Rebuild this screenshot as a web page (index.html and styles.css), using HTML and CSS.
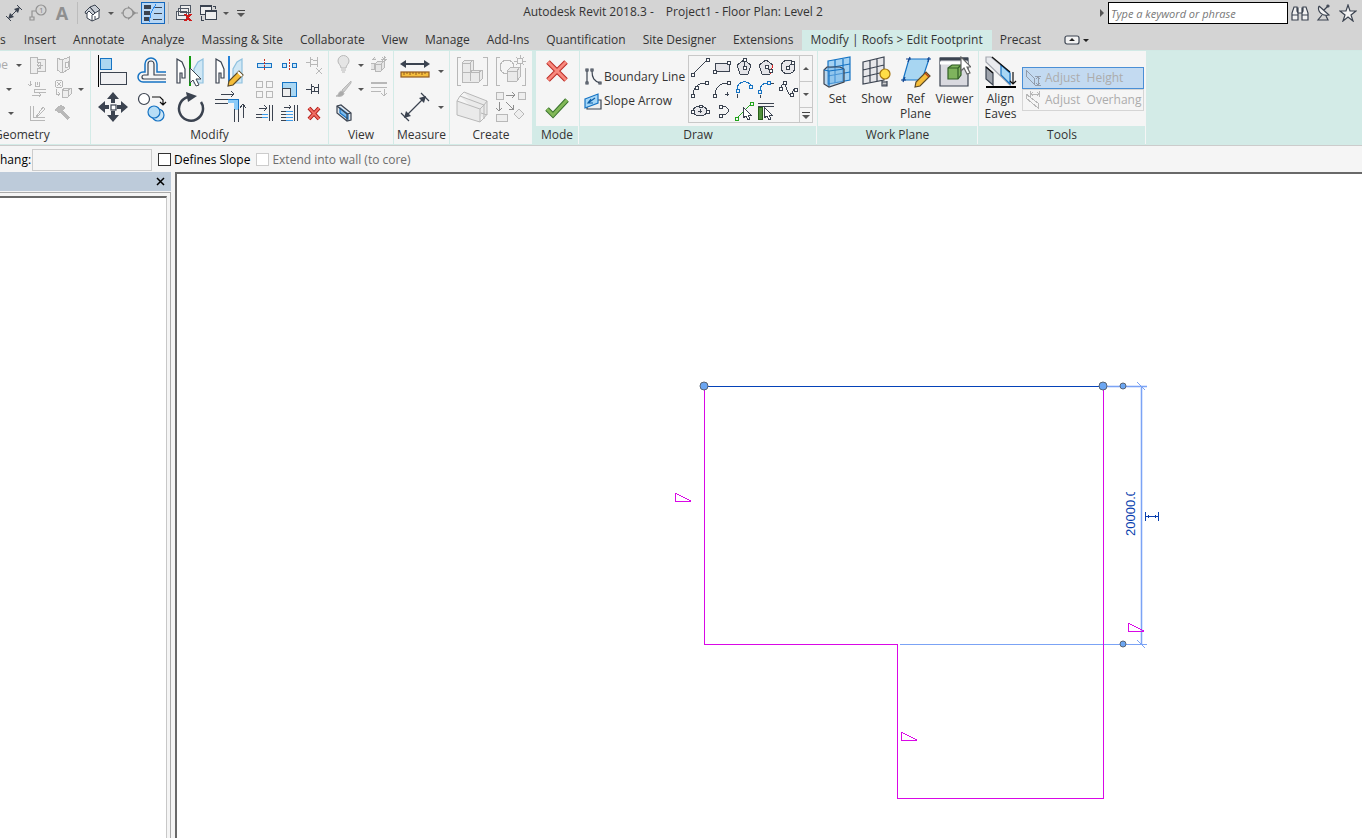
FILE: index.html
```
<!DOCTYPE html>
<html lang="en">
<head>
    <meta charset="UTF-8">
    <meta name="viewport" content="width=device-width, initial-scale=1.0">
    <title>Autodesk Revit 2018.3 - Project1 - Floor Plan: Level 2</title>
    <link rel="stylesheet" href="styles.css">
</head>
<body>
    <header class="titlebar">
        <div class="quick-access">
            <button class="qa" aria-label="Aligned dimension"><svg class="icon" width="18" height="18"><path d="M4 14L14 4M1 12l5 5M12 1l5 5" stroke-width="1"/><path d="M3 15l2-6 4 4zM15 3l-2 6-4-4z" fill="#3b4350" stroke="none"/></svg></button>
            <button class="qa" aria-label="Tag by category"><svg class="icon" width="18" height="18" stroke-width="1"><circle cx="12" cy="6" r="5" stroke="#929292"/><path d="M7 7H3v6M1 13h4v3H1z" stroke="#929292"/><text class="tag-digit" x="10" y="9">1</text></svg></button>
            <button class="qa glyph" aria-label="Text">A</button>
            <span class="divider"></span>
            <button class="qa" aria-label="Default 3D view"><svg class="icon" width="18" height="18" ><path d="M3 8v6l5 3 7-3V7L10 2z" fill="#fff" stroke-width="1"/><path d="M1 8l5-5 5 6-2 2-4-4-3 3zM6 3l5-2 5 5-5 3z" fill="#c9ced5" stroke-width="1"/><path d="M8 17v-6M11 12v3" stroke-width="1"/></svg></button>
            <button class="drop" aria-label="3D view options"></button>
            <button class="qa" aria-label="Section"><svg class="icon" width="18" height="18"><path d="M8 2l8 7-8 7z" fill="#8f8f8f" stroke="none"/><circle cx="8" cy="9" r="5" fill="#d4d4d4" stroke="#8f8f8f"/><path d="M1 9h3M15 9h3" stroke="#8f8f8f"/></svg></button>
            <button class="qa pressed" aria-label="Thin lines" aria-pressed="true"><svg class="icon crisp" width="18" height="18"><path d="M0 3h7M0 9h6M0 15h5" stroke-width="4"/><path d="M11 3h7M10 9h8M9 15h9"/><path d="M12 0L7 9l-2 9" stroke="#2c8bef"/></svg></button>
            <span class="divider"></span>
            <button class="qa" aria-label="Close hidden windows"><svg class="icon crisp" width="18" height="18"><path d="M5 1h10v7H5zM3 4h10v7H3zM1 7h10v8H1z" fill="#eee" stroke="#4f5763"/><path d="M10 10l6 7M16 10l-6 7" stroke="#d01818" stroke-width="2"/></svg></button>
            <button class="qa" aria-label="Switch windows"><svg class="icon crisp" width="18" height="18"><path d="M1 1h11v9H1z" fill="#eee"/><path d="M1 2h11" stroke-width="2"/><path d="M6 6h11v9H6z" fill="#eee"/><path d="M6 7h11" stroke-width="2"/><path d="M14 2h2v3M2 12v4h3"/></svg></button>
            <button class="drop" aria-label="Window list"></button>
            <button class="drop lined" aria-label="Customize quick access"></button>
        </div>
        <h1 class="title"><span>Autodesk Revit 2018.3 -</span><span>Project1 - Floor Plan: Level 2</span></h1>
        <div class="search">
            <button class="drop side" aria-label="Collapse search"></button>
            <input type="text" aria-label="Search" placeholder="Type a keyword or phrase">
            <button class="qa" aria-label="Find"><svg class="icon" width="18" height="18"><path d="M3 3h3v4l1 2v7H1V9zM12 3h3l2 6v7h-6V9l1-2zM6 4h1v5h4V4h1" fill="#f2f2f2"/><path d="M1 11h6M11 11h6"/></svg></button>
            <button class="qa" aria-label="Communication center"><svg class="icon" width="18" height="18"><path d="M4 2c-2 5 3 11 10 9L4 2M9 6l4-4" fill="#f2f2f2"/><circle cx="13" cy="2" r="1"/><path d="M7 11l-4 5h10l-2-4"/></svg></button>
            <button class="qa" aria-label="Favorites"><svg class="icon" width="18" height="18"><path d="M9 1l2 6h6l-5 4 2 6-5-4-5 4 2-6-5-4h6z" fill="#f2f2f2"/></svg></button>
        </div>
    </header>

    <nav class="tabs">
        <a href="#" class="tab cut">s</a>
        <a href="#" class="tab">Insert</a>
        <a href="#" class="tab">Annotate</a>
        <a href="#" class="tab">Analyze</a>
        <a href="#" class="tab">Massing &amp; Site</a>
        <a href="#" class="tab">Collaborate</a>
        <a href="#" class="tab">View</a>
        <a href="#" class="tab">Manage</a>
        <a href="#" class="tab">Add-Ins</a>
        <a href="#" class="tab">Quantification</a>
        <a href="#" class="tab">Site Designer</a>
        <a href="#" class="tab">Extensions</a>
        <a href="#" class="tab active">Modify | Roofs &gt; Edit Footprint</a>
        <a href="#" class="tab">Precast</a>
        <button class="ribbon-toggle" aria-label="Minimize ribbon"><svg class="icon" width="26" height="10"><rect x="1" y="1" width="14" height="8" rx="2" fill="#f2f2f2"/><path d="M5 6l3-3 3 3zM19 4h6l-3 3z" fill="#222" stroke="none"/></svg></button>
    </nav>

    <div class="ribbon">
        <section class="panel geometry">
            <div class="tools">
                <span class="faded first">pe<i class="caret"></i></span>
                <button aria-label="Cut"><svg class="icon muted" width="20" height="20"><path d="M2 2h7v5h3v6H9v5H2zM9 7V4h8v12H9v-3" fill="#eee"/><path d="M15 10H9m3-3l-3 3 3 3"/></svg></button>
                <button aria-label="Wall opening"><svg class="icon muted" width="20" height="20"><path d="M4 3l5 2 7-3v12l-7 4-5-3zM9 5v13M12 8v5l3-1V7z" fill="#eee"/></svg></button>
                <span></span>
                <span class="faded"><i class="caret"></i></span>
                <button aria-label="Join"><svg class="icon muted" width="20" height="20"><path d="M2 2v5m-2-2l2 2 2-2M7 3v4h4V3M9 3v3M6 10h12M6 13h12M6 10v3M4 16h9m-2-2l2 2-2 2"/></svg></button>
                <button aria-label="Split face"><svg class="icon muted" width="20" height="20"><circle cx="6" cy="5" r="4"/><path d="M4 3l4 4M8 3L4 7M3 10v5h4m-2-2l2 2-2 2"/><path d="M9 11l3-2h6v6l-3 3H9zM9 11h6v7M15 11l3-2" fill="#eee"/></svg></button>
                <span><i class="caret"></i></span>
                <span class="faded"><i class="caret late"></i></span>
                <button aria-label="Beam joins"><svg class="icon muted" width="20" height="20"><path d="M2 3v14h15M5 3v11h12M8 14l7-10 2 2-7 7-4 2z"/></svg></button>
                <button aria-label="Demolish"><svg class="icon muted" width="20" height="20"><path d="M2 7l6-5 4 3-5 5z" fill="#bbb"/><path d="M8 8l8 8" stroke-width="3"/></svg></button>
            </div>
            <h2>Geometry</h2>
        </section>

        <section class="panel modify">
            <div class="body">
                <div class="tools large">
                    <button aria-label="Align"><svg class="icon crisp" width="32" height="32"><path d="M1 0v32" stroke="#000"/><rect x="3" y="3" width="11" height="11" fill="#acd7f1" stroke="#1673c3"/><rect x="3" y="17" width="26" height="12" fill="#f0f0f2"/></svg></button>
                    <button aria-label="Offset"><svg class="icon" width="32" height="32"><path d="M30 17H21V9a6 6 0 0 0-12 0v8H7a5 5 0 0 0 0 10h23" stroke="#1673c3" stroke-width="1.500"/><path d="M30 20H18V9a2 2 0 0 0-6 0v11H8a2 2 0 0 0 0 4h22"/></svg></button>
                    <button aria-label="Mirror pick axis"><svg class="icon" width="32" height="32"><path d="M2 4l5 3 3 7v9H7v-5H5v10H2z" fill="#fff"/><path d="M28 4l-5 3-4 7v14h9z" fill="#cfe7f5" stroke="#8fc1df"/><path d="M15 1v30" stroke="#149b10" stroke-width="2"/><path d="M15 13v15l3-3 3 6 3-1-3-6h5z" fill="#fff" stroke-width="1"/></svg></button>
                    <button aria-label="Mirror draw axis"><svg class="icon" width="32" height="32"><path d="M2 4l5 3 3 7v9H7v-5H5v10H2z" fill="#fff"/><path d="M28 4l-5 3-4 7v14h9z" fill="#cfe7f5" stroke="#8fc1df"/><path d="M15 1v28" stroke="#2581d8" stroke-width="2"/><path d="M14 31l1-5 10-10 4 4-10 10z" fill="#f5bd39" stroke="#5c4a28"/><path d="M24 17l4 4" stroke="#fff" stroke-width="2"/></svg></button>
                    <button aria-label="Move"><svg class="icon" width="32" height="32"><path d="M16 1l6 7h-4v4h-4V8h-4zM16 31l6-7h-4v-4h-4v4h-4zM1 16l7-6v4h4v4H8v4zM31 16l-7-6v4h-4v4h4v4z" fill="#3b4350" stroke="none"/><rect x="14" y="14" width="5" height="5" fill="#fff"/></svg></button>
                    <button aria-label="Copy"><svg class="icon" width="32" height="32"><circle cx="8" cy="8" r="5.500" fill="#fff"/><path d="M16 6h8l3 3v4m-3-2l3 3 3-3" stroke="#111"/><circle cx="22" cy="24" r="6" fill="#c9e5f7" stroke="#1673c3"/><circle cx="18" cy="21" r="6" fill="#b7def6" stroke="#1673c3"/></svg></button>
                    <button aria-label="Rotate"><svg class="icon" width="32" height="32"><path d="M26 11A12 12 0 1 1 13 6" stroke-width="2.500"/><path d="M11 1l11 4-9 6z" fill="#3b4350" stroke="none"/></svg></button>
                    <button aria-label="Trim/extend to corner"><svg class="icon crisp" width="32" height="32"><path d="M14 10h8v9" stroke="#8bcbf8" stroke-width="4"/><path d="M14 8h10v10" stroke="#1673c3"/><path d="M7 3h13m-3-3l3 3-3 3M1 8h13M1 12h13M20 18v13M24 18v13M29 27V13m-3 4l3-4 3 4"/></svg></button>
                </div>
                <div class="tools small">
                    <button aria-label="Split element"><svg class="icon crisp" width="20" height="20"><path d="M3 8h14v4H3z" fill="#cce6f8" stroke="#1673c3"/><path d="M10 4v12" stroke="#c62f20" stroke-dasharray="2 1"/></svg></button>
                    <button aria-label="Split with gap"><svg class="icon crisp" width="20" height="20"><path d="M3 8h4v4H3zM13 8h4v4h-4z" fill="#cce6f8" stroke="#1673c3"/><path d="M10 4v12" stroke="#c62f20" stroke-dasharray="2 1"/></svg></button>
                    <button aria-label="Unpin"><svg class="icon muted" width="20" height="20"><path d="M2 7h4M6 2v10M6 4l3 1h4M6 10l3-1h4M13 2v10M12 13l6 6M18 13l-6 6"/></svg></button>
                    <button aria-label="Array"><svg class="icon muted" width="20" height="20"><path d="M2 2h6v6H2zM12 2h6v6h-6zM2 12h6v6H2zM12 12h6v6h-6z"/></svg></button>
                    <button aria-label="Scale"><svg class="icon crisp" width="20" height="20"><path d="M3 3h14v14H3z" fill="#a9d7f4" stroke="#1673c3"/><path d="M3 9h8v8H3z" fill="#eee"/></svg></button>
                    <button aria-label="Pin"><svg class="icon crisp" width="20" height="20"><path d="M2 10h5M7 5v10M7 7l3 1h4M7 13l3-1h4M14 5v10M10 8v4"/></svg></button>
                    <button aria-label="Trim/extend single"><svg class="icon crisp" width="20" height="20"><path d="M5 5h7m-2-3l3 3-3 3M15 2v16M18 2v16M2 11h6M2 14h6"/><path d="M8 11h6M8 14h6" stroke="#3c9bea"/></svg></button>
                    <button aria-label="Trim/extend multiple"><svg class="icon crisp" width="20" height="20"><path d="M5 4h7m-2-2l2 2-2 2M15 2v16M18 2v16M2 8h5M2 11h5M2 14h5M2 17h5"/><path d="M7 8h7M7 11h7M7 14h7M7 17h7" stroke="#3c9bea"/></svg></button>
                    <button aria-label="Delete"><svg class="icon" width="20" height="20"><path d="M5 5l10 11M15 5L5 16" stroke="#ac1815" stroke-width="4"/><path d="M5 5l10 11M15 5L5 16" stroke="#f06d62" stroke-width="2"/></svg></button>
                </div>
            </div>
            <h2>Modify</h2>
        </section>

        <section class="panel view">
            <div class="tools">
                <button aria-label="Hide in view"><svg class="icon muted smooth" width="20" height="20"><path d="M7 13c0-3-3-4-3-7a5 5 0 0 1 11 0c0 3-3 4-3 7zM7 15h5M8 17h3" fill="#e5e5e5"/></svg></button>
                <span><i class="caret"></i></span>
                <button aria-label="Displace elements"><svg class="icon muted" width="20" height="20"><path d="M6 9l3-3h6v7l-3 3H6zM6 9h6v7M12 9l3-3M2 8h3v6H2M7 4H4l2-2M15 1v6M12 4h6M13 2l4 4M17 2l-4 4" fill="#e5e5e5"/></svg></button>
                <button aria-label="Override graphics"><svg class="icon muted smooth" width="20" height="20"><path d="M17 2l-9 9 2 2 7-9z" fill="#ccc"/><path d="M2 17c3 0 2-5 6-5l2 2c0 3-4 4-8 3z" fill="#aaa"/></svg></button>
                <span><i class="caret"></i></span>
                <button aria-label="Linework"><svg class="icon muted" width="20" height="20"><path d="M2 4h16" stroke-width="2"/><path d="M2 8h16M2 12h10M15 10v7m-3-3l3 3 3-3"/></svg></button>
                <button aria-label="Selection box"><svg class="icon" width="20" height="20"><path d="M3 3l4-1 10 8v7l-4 1L3 10z" fill="#dfe5eb"/><path d="M6 5l8 6v5l-8-6z" fill="#7cbdf2" stroke="#1673c3"/><path d="M3 3l10 8v7M13 11l4-1"/></svg></button>
            </div>
            <h2>View</h2>
        </section>

        <section class="panel measure">
            <div class="tools">
                <button aria-label="Measure between"><svg class="icon" width="32" height="32"><path d="M4 9h24" stroke-width="2"/><path d="M1 9l6-4v8zM31 9l-6-4v8z" fill="#3b4350" stroke="none"/><rect x="2" y="17" width="28" height="5" fill="#f4bd3d" stroke="#925a1f"/><path d="M5 17v3M8 17v2M11 17v3M14 17v2M17 17v3M20 17v2M23 17v3M26 17v2" stroke="#925a1f" stroke-width="1"/></svg></button>
                <span><i class="caret"></i></span>
                <button aria-label="Dimension"><svg class="icon" width="32" height="32"><path d="M6 26L26 6M2 22l8 8M22 2l8 8"/><path d="M5 27l2-7 5 5zM27 5l-7 2 5 5z" fill="#3b4350" stroke="none"/></svg></button>
                <span><i class="caret"></i></span>
            </div>
            <h2>Measure</h2>
        </section>

        <section class="panel create">
            <div class="tools">
                <button aria-label="Create assembly"><svg class="icon muted" width="32" height="32"><path d="M5 2H1v28h4M27 2h4v28h-4"/><path d="M6 8l3-3h8v10h9v9l-3 3H6zM6 8h8v9H6M14 8l3-3M14 17h9v9M14 17v9M23 17l3-2M14 17l3-2" fill="#eaeaea"/></svg></button>
                <button aria-label="Create group"><svg class="icon muted" width="32" height="32"><path d="M5 2H1v28h4M27 30h3V13"/><circle cx="12" cy="12" r="7"/><path d="M12 16l4-4h9v10l-3 4H12zM12 16h10v10M22 16l3-4" fill="#eaeaea"/><circle cx="25" cy="6" r="3"/><path d="M25 0v3M25 9v3M19 6h3M28 6h3M21 2l2 2M27 8l2 2M29 2l-2 2M23 8l-2 2"/></svg></button>
                <button aria-label="Create similar"><svg class="icon muted smooth" width="32" height="32"><path d="M8 1l23 9v14l-6-2M4 5l24 9v14" fill="#eaeaea"/><path d="M1 10l23 8v13L1 24zM1 10l3-5M24 18l4-4M24 31l4-4M4 5l4-4M28 14l3-4M28 27l3-4" fill="#eaeaea"/></svg></button>
                <button aria-label="Create parts"><svg class="icon muted" width="32" height="32"><path d="M1 1h7v7H1zM23 1h7v7h-7zM1 23h11v7H1zM24 18l5 5-5 5-5-5z" fill="#eee"/><path d="M11 4h9m-3-3l3 3-3 3M4 11v9m-3-3l3 3 3-3M11 11l7 7m0-4v4h-4" stroke="#8f8f8f"/></svg></button>
            </div>
            <h2>Create</h2>
        </section>

        <section class="panel contextual mode">
            <div class="tools">
                <button aria-label="Cancel edit mode"><svg class="icon" width="32" height="32"><path d="M7 7l18 18M25 7L7 25" stroke="#bb2a24" stroke-width="5"/><path d="M7 7l18 18M25 7L7 25" stroke="#f8897e" stroke-width="3"/></svg></button>
                <button aria-label="Finish edit mode"><svg class="icon" width="32" height="32"><path d="M6 18l6 6L26 9" stroke="#37712c" stroke-width="5"/><path d="M6 18l6 6L26 9" stroke="#82b858" stroke-width="3"/></svg></button>
            </div>
            <h2>Mode</h2>
        </section>

        <section class="panel contextual draw">
            <div class="body">
                <div class="draw-modes">
                    <button><svg class="icon" width="18" height="18"><path d="M3 3v12M8 3c0 7 2 10 8 12"/><path d="M2 1h2v2H2zM2 14h2v2H2zM7 1h2v2H7zM15 14h2v2h-2z" fill="#fff"/></svg>Boundary Line</button>
                    <button><svg class="icon" width="18" height="18"><path d="M3 8h14v9H3z" fill="#eee"/><path d="M1 7l13-5v9L1 16z" fill="#a5d6f7" stroke="#1673c3"/><path d="M11 6l-7 5m3-4l-3 4h5" stroke="#0d5ea8"/></svg>Slope Arrow</button>
                </div>
                <div class="gallery">
                    <button aria-label="Line"><svg class="icon thin" width="20" height="20"><path d="M3 17L17 3"/><path class="node" d="M1 16h3v3H1zM16 1h3v3h-3z"/></svg></button>
                    <button aria-label="Rectangle"><svg class="icon thin" width="20" height="20"><path d="M3 6h14v8H3z" fill="#e4e4e8"/><path class="node" d="M1 13h3v3H1zM15 4h3v3h-3z"/></svg></button>
                    <button aria-label="Inscribed polygon"><svg class="icon thin" width="20" height="20"><path d="M10 3l7 5-3 9H6L3 8z" fill="#e4e4e8"/><path d="M10 3v8"/><path class="node" d="M9 1h3v3H9zM9 9h3v3H9z"/></svg></button>
                    <button aria-label="Circumscribed polygon"><svg class="icon thin" width="20" height="20"><path d="M10 3l7 5-3 9H6L3 8z" fill="#e4e4e8"/><path d="M17 8l-3 9" stroke="#e02020"/><path d="M10 10l4 3"/><path class="node" d="M9 8h3v3H9zM13 12h3v3h-3z"/></svg></button>
                    <button aria-label="Circle"><svg class="icon thin" width="20" height="20"><circle cx="10" cy="10" r="7" fill="#e8e8eb"/><path d="M10 10l4-4"/><path class="node" d="M8 9h3v3H8zM13 4h3v3h-3z"/></svg></button>
                    <button aria-label="Start-end-radius arc"><svg class="icon thin" width="20" height="20"><path d="M3 16c0-7 5-12 13-12"/><path class="node" d="M1 15h3v3H1zM5 7h3v3H5zM15 2h3v3h-3z"/></svg></button>
                    <button aria-label="Center-ends arc"><svg class="icon thin" width="20" height="20"><path d="M3 16c0-7 5-12 13-12M13 15h4M15 13v4"/><path class="node" d="M1 15h3v3H1zM15 2h3v3h-3z"/></svg></button>
                    <button aria-label="Tangent end arc"><svg class="icon thin" width="20" height="20"><path d="M3 11C3 1 15 1 17 7M2 10h3v3H2zM15 6h3v3h-3z" stroke="#1673c3"/><path d="M3 15v4"/></svg></button>
                    <button aria-label="Fillet arc"><svg class="icon thin" width="20" height="20"><path d="M4 12c0-5 3-8 8-8M2 11h3v3H2zM11 2h3v3h-3z" stroke="#1673c3"/><path d="M4 16v3M15 4h3"/></svg></button>
                    <button aria-label="Spline"><svg class="icon thin" width="20" height="20"><path d="M3 9c2-7 4-5 5-1s4 11 6 6 2-4 3-1"/><path class="node" d="M1 8h3v3H1zM5 2h3v3H5zM12 14h3v3h-3zM16 9h3v3h-3z"/></svg></button>
                    <button aria-label="Ellipse"><svg class="icon thin" width="20" height="20"><ellipse cx="10" cy="10" rx="7" ry="5" fill="#e8e8eb"/><path d="M8 10h4M10 8v4"/><path class="node" d="M1 9h3v3H1zM16 9h3v3h-3zM9 4h3v2H9z"/></svg></button>
                    <button aria-label="Partial ellipse"><svg class="icon thin" width="20" height="20"><path d="M9 5c10 0 10 9 0 9"/><path class="node" d="M7 4h3v3H7zM7 13h3v3H7z"/></svg></button>
                    <button aria-label="Pick lines"><svg class="icon thin" width="20" height="20"><path d="M3 17L17 3M1 16h3v3H1zM16 1h3v3h-3z" stroke="#22a51c"/><path d="M9 6v11l3-2 2 4 2-1-2-4h3z" fill="#fff"/></svg></button>
                    <button aria-label="Pick walls"><svg class="icon thin" width="20" height="20"><path d="M2 2h16M2 5h16" stroke-width="1"/><path d="M2 6h4v12H2z" fill="#51913b" stroke="#286018"/><path d="M8 6v11l3-2 2 4 2-1-2-4h3z" fill="#fff"/></svg></button>
                    <div class="gallery-scroll">
                        <button aria-label="Scroll up"><i class="caret up"></i></button>
                        <button aria-label="Scroll down"><i class="caret"></i></button>
                        <button class="drop lined" aria-label="More draw tools"></button>
                    </div>
                </div>
            </div>
            <h2>Draw</h2>
        </section>

        <section class="panel contextual workplane">
            <div class="body">
                <button class="big"><svg class="icon" width="32" height="32"><path d="M6 5l22-4v23L6 28z" fill="#a3d2f3" stroke="#1673c3"/><path d="M6 12l22-4M6 20l22-4M13 4v23M21 3v22" stroke="#1673c3"/><path d="M2 14l3-3h13l4 2v13L7 31l-5-3z" fill="#7fb9e8" fill-opacity="0.500"/><path d="M2 14l5 1v15M7 15l15-2" stroke="#1673c3"/></svg><span>Set</span></button>
                <button class="big"><svg class="icon" width="32" height="32"><path d="M2 6l21-5v23L2 28zM2 14l21-5M2 21l21-5M9 4v22M16 3v22" fill="#e7e7ea"/><path d="M21 25v5h5v-5" fill="#ccc"/><circle cx="24" cy="18" r="5" fill="#ffdd46" stroke="#a47410"/><path d="M21 26h5M22 29h4"/></svg><span>Show</span></button>
                <button class="big"><svg class="icon" width="32" height="32"><path d="M9 3h20l-7 21H3z" fill="#a8d6f2" stroke="#1673c3"/><path d="M6 3h5M10 1l-2 5M27 3h4M29 1l-1 5M1 24h5M5 21l-2 5" stroke="#14458f"/><path d="M15 31l1-5 10-10 4 4-10 10z" fill="#f5bd39" stroke="#5c4a28"/><path d="M25 17l4 4" stroke="#b33c19"/></svg><span>Ref Plane</span></button>
                <button class="big"><svg class="icon" width="32" height="32"><path d="M1 2h28v28H1z" fill="#d9d9df"/><path d="M1 3h28" stroke-width="3"/><path d="M1 7h28" stroke="#fff" stroke-width="3"/><path d="M9 12l4-3h9v10l-3 4H9z" fill="#7fb35d" stroke="#315f25"/><path d="M9 12h10v11M19 12l3-3" stroke="#315f25"/><path d="M22 1v14l3-3 3 6 3-1-3-6h4z" fill="#fff" stroke="#666"/></svg><span>Viewer</span></button>
            </div>
            <h2>Work Plane</h2>
        </section>

        <section class="panel contextual eaves">
            <div class="body">
                <button class="big"><svg class="icon" width="32" height="32"><path d="M1 1h5l19 16v12L1 6z" fill="#e9eaee" stroke="#a5a8b0"/><path d="M1 11l7 6v12l-7-6z" fill="#9fa4ad"/><path d="M16 9l9 8v11l-9-9z" fill="#a9d7f4" stroke="#1673c3"/><path d="M7 1l18 15M1 11l7 6" stroke="#111"/><path d="M28 16v12m-3-3l3 3 3-3" stroke="#111"/><path d="M1 31h30" stroke="#000" stroke-width="2"/></svg><span>Align Eaves</span></button>
                <div class="adjust">
                    <button class="selected" disabled><svg class="icon muted" width="18" height="18"><path d="M2 1l8 8v6L2 7zM11 7h6M11 16h6M14 8v8m-2-2l2 2 2-2m-4-4l2-2 2 2" stroke="#929cab"/></svg>Adjust&nbsp; Height</button>
                    <button disabled><svg class="icon muted" width="18" height="18"><path d="M2 3l12 9v5L2 7zM6 0v6M15 0v6M6 3h9m-6-2L7 3l2 2m4-4l2 2-2 2"/></svg>Adjust&nbsp; Overhang</button>
                </div>
            </div>
            <h2>Tools</h2>
        </section>
    </div>

    <form class="options">
        <label for="overhang">hang:</label>
        <input type="text" id="overhang" disabled>
        <input type="checkbox" id="slope">
        <label for="slope">Defines Slope</label>
        <input type="checkbox" id="extend" disabled>
        <label for="extend" class="off">Extend into wall (to core)</label>
    </form>

    <div class="workspace">
        <aside class="browser">
            <div class="browser-head"><button aria-label="Close"><svg width="10" height="10"><path d="M1 1l7 7M8 1L1 8" stroke="#000" stroke-width="1.500"/></svg></button></div>
            <div class="browser-frame"><div class="browser-list"></div></div>
        </aside>
        <main class="canvas">
            <svg class="sketch" width="100%" height="100%">
                <defs>
                    <clipPath id="dimClip"><path d="M940 318h30v60h-30z"/></clipPath>
                </defs>
                <!-- temporary dimension -->
                <g class="dimension">
                    <path class="halo" d="M928 212H970M964 212V470"/>
                    <path d="M928 212H970M964 212V470M723 470H970"/>
                    <path d="M960 208l8 8M960 466l8 8"/>
                </g>
                <!-- roof footprint -->
                <g class="footprint">
                    <path d="M527 212V470H720V624H926V212"/>
                    <path class="picked" d="M527 212H926"/>
                </g>
                <!-- slope markers -->
                <g class="footprint">
                    <path d="M498 319v8h16z"/>
                    <path d="M951 449v8h16z"/>
                    <path d="M724 558v8h16z"/>
                </g>
                <g class="grip">
                    <circle cx="527" cy="212" r="4"/>
                    <circle cx="926" cy="212" r="4"/>
                    <circle cx="946" cy="212" r="3"/>
                    <circle cx="946" cy="470" r="3"/>
                </g>
                <g clip-path="url(#dimClip)"><text class="dim-text" transform="translate(958 362) rotate(-90)">20000.0</text></g>
                <path class="dim-toggle" d="M968 338v9M981 338v9M968 342h13M971 341v3M978 341v3"/>
            </svg>
        </main>
    </div>
</body>
</html>
```
FILE: styles.css
```
* {
    box-sizing: border-box;
}
body {
    margin: 0;
    height: 100vh;
    display: flex;
    flex-direction: column;
    overflow: hidden;
    background-color: #f5f5f5;
    color: #333;
    font-family: "Open Sans", "Noto Sans", sans-serif;
    font-size: 12px;
    line-height: 16px;
}
button {
    display: flex;
    align-items: center;
    justify-content: center;
    margin: 0;
    padding: 0;
    border: none;
    background: none;
    color: inherit;
    font: inherit;
}
h1, h2 {
    margin: 0;
    font-size: 12px;
    font-weight: normal;
}
a {
    color: inherit;
    text-decoration: none;
}
svg {
    display: block;
    flex-shrink: 0;
}
.icon {
    fill: none;
    stroke: #3b4350;
    stroke-width: 1.2;
}
.icon.crisp, .icon.thin, .icon.muted {
    stroke-width: 1;
    shape-rendering: crispEdges;
}
.icon.muted {
    stroke: #b8b8b8;
}
.icon.smooth {
    shape-rendering: auto;
}
.node {
    fill: #fff;
}

/* Title bar */
.titlebar {
    display: flex;
    align-items: center;
    height: 26px;
    flex-shrink: 0;
    background-color: #d4d4d4;
}
.quick-access, .search {
    display: flex;
    align-items: center;
}
.quick-access {
    padding-left: 2px;
}
.qa {
    width: 24px;
    height: 22px;
}
.qa.pressed {
    border: 1px solid #1467bd;
    background-color: #b6d6f5;
}
.glyph {
    color: #8f8f8f;
    font-size: 18px;
    font-weight: bold;
}
.tag-digit {
    fill: #888;
    stroke: none;
    font-size: 8px;
}
.divider {
    width: 1px;
    height: 22px;
    margin: 0 3px;
    background-color: #bcbcbc;
}
.caret, .drop::before {
    content: "";
    display: block;
    border: 3px solid transparent;
    border-top-color: #555;
    border-bottom: none;
}
.drop {
    width: 12px;
    height: 22px;
}
.quick-access .drop.lined {
    width: 18px;
}
.drop.lined {
    flex-direction: column;
}
.drop.lined::before {
    border-width: 4px;
    border-bottom: none;
    order: 2;
}
.drop.lined::after {
    content: "";
    width: 8px;
    height: 1px;
    margin-bottom: 2px;
    background-color: #444;
}
.drop.side::before {
    border: 4px solid transparent;
    border-left-color: #555;
    border-right: none;
}
.title {
    display: flex;
    flex: 1;
    justify-content: center;
    gap: 12px;
    line-height: 24px;
    align-self: flex-start;
}
.search {
    padding-right: 2px;
}
.search input {
    width: 180px;
    height: 22px;
    padding: 0 2px;
    border: 1px solid #000;
    background-color: #fff;
    font: italic 11px "Open Sans", sans-serif;
}
.search input::placeholder {
    color: #777;
}

/* Tabs */
.tabs {
    display: flex;
    align-items: flex-end;
    height: 25px;
    flex-shrink: 0;
    background-color: #d4d4d4;
    border-bottom: 1px solid #d1e9e5;
}
.tab {
    padding: 2px 9px 2px 8px;
    white-space: nowrap;
}
.tab.cut {
    padding-left: 0;
    padding-right: 10px;
}
.tab.active {
    background-color: #d3ebe7;
}
.ribbon-toggle {
    height: 20px;
    margin-left: 14px;
}

/* Ribbon */
.ribbon {
    display: flex;
    height: 95px;
    flex-shrink: 0;
    background-color: #d3ebe7;
    border-bottom: 1px solid #ccc;
}
.panel {
    display: flex;
    flex-direction: column;
    justify-content: space-between;
    flex-shrink: 0;
    margin-bottom: 1px;
    border-right: 1px solid #d3ebe7;
    background-color: #f5f5f5;
}
.panel h2 {
    line-height: 18px;
    text-align: center;
    white-space: nowrap;
}
.panel.contextual {
    border-right: 1px solid #f5f5f5;
    margin-right: 1px;
}
.panel.contextual h2 {
    background-color: #d3ebe7;
}
.body {
    display: flex;
    height: 75px;
}
.tools {
    display: grid;
    grid-template-rows: repeat(3, 24px);
    align-content: start;
    align-items: center;
    justify-items: center;
    padding-top: 2px;
}
.tools.large, .measure .tools, .create .tools, .mode .tools {
    grid-template-rows: repeat(2, 36px);
}
.geometry {
    width: 91px;
}
.geometry .tools {
    grid-template-columns: 26px 24px 26px 10px;
}
.geometry h2 {
    text-align: left;
    text-indent: -6px;
}
.faded {
    display: flex;
    align-items: center;
    justify-self: start;
    gap: 8px;
    padding-left: 6px;
    color: #aaa;
}
.faded.first {
    padding-left: 0;
    margin-left: -6px;
}
.faded .late {
    margin-left: 2px;
}
.modify {
    width: 238px;
}
.tools.large {
    grid-template-columns: repeat(4, 39px);
    padding-left: 2px;
}
.tools.small {
    grid-template-columns: repeat(3, 25px);
    padding-left: 2px;
}
.view {
    width: 65px;
}
.view .tools {
    grid-template-columns: 26px 8px 28px;
    padding-left: 2px;
}
.measure {
    width: 56px;
}
.measure .tools {
    grid-template-columns: 40px 12px;
    padding-left: 1px;
}
.create {
    width: 82px;
    margin-right: 4px;
    border-right: none;
}
.create .tools {
    grid-template-columns: 38px 40px;
    padding-left: 3px;
}
.mode {
    width: 43px;
}
.draw {
    width: 237px;
}
.draw .body {
    padding-left: 4px;
    justify-content: space-between;
}
.draw-modes {
    display: flex;
    flex-direction: column;
    align-items: flex-start;
    padding-top: 14px;
}
.draw-modes button {
    height: 24px;
    gap: 2px;
    white-space: nowrap;
}
.gallery {
    display: grid;
    grid-template-columns: repeat(5, 22px) 13px;
    grid-template-rows: repeat(3, 22px);
    align-self: flex-start;
    margin: 4px 3px 0 0;
    border: 1px solid #c8c8c8;
    place-items: center;
}
.gallery-scroll {
    grid-column: 6;
    grid-row: 1 / 4;
    display: grid;
    grid-template-rows: 26px 26px 14px;
    width: 13px;
    border-left: 1px solid #c8c8c8;
}
.gallery-scroll button {
    width: 12px;
    height: auto;
    border-bottom: 1px solid #c8c8c8;
}
.gallery-scroll button:last-child {
    border-bottom: none;
}
.caret.up {
    border-top: none;
    border-bottom: 3px solid #555;
}
.workplane {
    width: 160px;
}
.big {
    flex-direction: column;
    justify-content: flex-start;
    width: 39px;
    padding-top: 5px;
    line-height: 15px;
    gap: 3px;
}
.eaves {
    width: 167px;
}
.eaves .body {
    padding-right: 1px;
}
.eaves .big {
    width: 43px;
}
.adjust {
    display: flex;
    flex: 1;
    flex-direction: column;
    padding-top: 16px;
}
.adjust button {
    justify-content: flex-start;
    gap: 3px;
    height: 22px;
    padding-left: 1px;
    border: 1px solid #d5d5d5;
    color: #acacac;
    white-space: nowrap;
}
.adjust .selected {
    border-color: #4a8fd6;
    background-color: #c3daf1;
}

/* Options bar */
.options {
    display: flex;
    align-items: center;
    height: 26px;
    flex-shrink: 0;
    padding-top: 1px;
    color: #000;
}
.options input[type="text"] {
    width: 120px;
    height: 22px;
    margin: 0 6px 0 1px;
    border: 1px solid #ccc;
    background-color: #f5f5f5;
}
.options input[type="checkbox"] {
    appearance: none;
    width: 13px;
    height: 13px;
    margin: 0 3px 0 0;
    border: 1px solid #333;
    background-color: #fff;
}
.options input[type="checkbox"]:disabled {
    margin-left: 6px;
    border-color: #ccc;
}
.options .off {
    color: #6d6d6d;
}

/* Workspace */
.workspace {
    display: flex;
    flex: 1;
    min-height: 0;
}
.browser {
    display: flex;
    flex-direction: column;
    width: 171px;
    margin-right: 4px;
}
.browser-head {
    display: flex;
    justify-content: flex-end;
    height: 19px;
    padding-right: 5px;
    background-color: #bdcbda;
}
.browser-frame {
    flex: 1;
    margin-top: 1px;
    padding: 3px 3px 0 0;
    border-top: 1px solid #aaa;
    border-right: 1px solid #aaa;
}
.browser-list {
    height: 100%;
    border-top: 2px solid #696969;
    border-right: 1px solid #c8c8c8;
    background-color: #fff;
}
.canvas {
    flex: 1;
    min-width: 0;
    border-top: 2px solid #696969;
    border-left: 2px solid #696969;
    background-color: #fff;
}
.sketch {
    fill: none;
    shape-rendering: crispEdges;
}
.footprint {
    stroke: #d908e6;
}
.footprint .picked {
    stroke: #0542b8;
}
.dimension {
    stroke: #7ba3f5;
}
.dimension .halo {
    stroke: #dbe6fd;
    stroke-width: 3;
}
.grip {
    fill: #6ba6f2;
    stroke: #586474;
    shape-rendering: auto;
}
.dim-text {
    fill: #0a3fae;
    font: 13px "Liberation Sans", sans-serif;
}
.dim-toggle {
    stroke: #0a3fae;
}
```
